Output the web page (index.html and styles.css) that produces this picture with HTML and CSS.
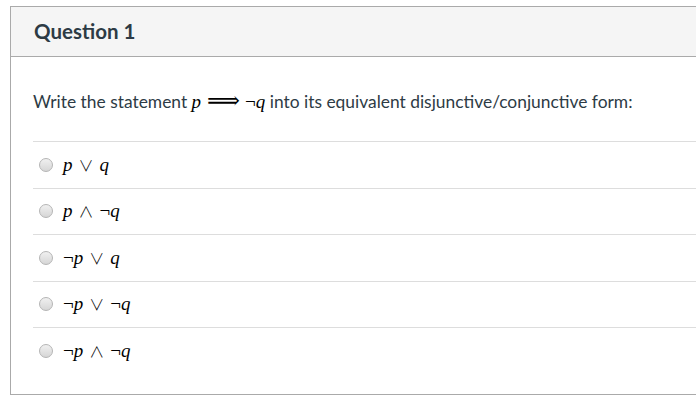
FILE: index.html
```html
<!DOCTYPE html>
<html>
<head>
<meta charset="utf-8">
<link rel="stylesheet" href="styles.css">
</head>
<body>
<div class="question">
  <div class="q-header"><h2 class="q-title">Question 1</h2></div>
  <div class="q-body">
    <p class="q-text">Write the statement <span class="m"><i>p</i><span class="arrow">⟹</span>¬<i>q</i></span> into its equivalent disjunctive/conjunctive form:</p>
    <div class="answers">
      <label class="answer"><span class="radio"></span><span class="m"><i>p</i><span class="op">∨</span><i>q</i></span></label>
      <label class="answer"><span class="radio"></span><span class="m"><i>p</i><span class="op">∧</span>¬<i>q</i></span></label>
      <label class="answer"><span class="radio"></span><span class="m">¬<i>p</i><span class="op">∨</span><i>q</i></span></label>
      <label class="answer"><span class="radio"></span><span class="m">¬<i>p</i><span class="op">∨</span>¬<i>q</i></span></label>
      <label class="answer"><span class="radio"></span><span class="m">¬<i>p</i><span class="op">∧</span>¬<i>q</i></span></label>
    </div>
  </div>
</div>
</body>
</html>
```
FILE: styles.css
```css
html, body {
  margin: 0;
  padding: 0;
  background: #fff;
}
body {
  font-family: Lato, "Liberation Sans", sans-serif;
  color: #2d3b45;
}
.question {
  margin: 6px 0 0 10px;
  width: 720px;
  border: 1px solid #aaaaaa;
  border-right: none;
  box-sizing: border-box;
  height: 389px;
}
.q-header {
  height: 47px;
  padding-bottom: 2px;
  background: #f5f5f5;
  border-bottom: 1px solid #aaaaaa;
  display: flex;
  align-items: center;
  padding-left: 23px;
}
.q-title {
  margin: 0;
  font-size: 20.5px;
  font-weight: 700;
  color: #2d3b45;
}
.q-body {
  padding-left: 22px;
}
.q-text {
  margin: 0;
  padding-top: 32px;
  height: 52px;
  font-size: 17.4px;
  line-height: 24px;
}
.m {
  font-family: "Liberation Serif", "DejaVu Serif", serif;
  font-size: 19px;
  color: #000;
}
.m i {
  font-style: italic;
}
.arrow {
  font-family: "DejaVu Serif", serif;
  font-size: 23px;
  line-height: 1;
  margin: 0 5px 0 6px;
}
.op {
  font-family: "Noto Sans CJK JP", "DejaVu Serif", serif;
  font-weight: 300;
  font-size: 15px;
  margin: 0 6px 0 6px;
}
.answers {
  border-top: 1px solid #dddddd;
}
.answer {
  display: flex;
  align-items: center;
  height: 45.5px;
  border-bottom: 1px solid #dddddd;
}
.answer:last-child {
  border-bottom: none;
}
.radio {
  width: 12px;
  height: 12px;
  border-radius: 50%;
  border: 1px solid #b5b5b5;
  background: linear-gradient(#f0f0f0, #d6d6d6);
  margin-left: 6px;
  margin-right: 10px;
  flex: none;
}
```
